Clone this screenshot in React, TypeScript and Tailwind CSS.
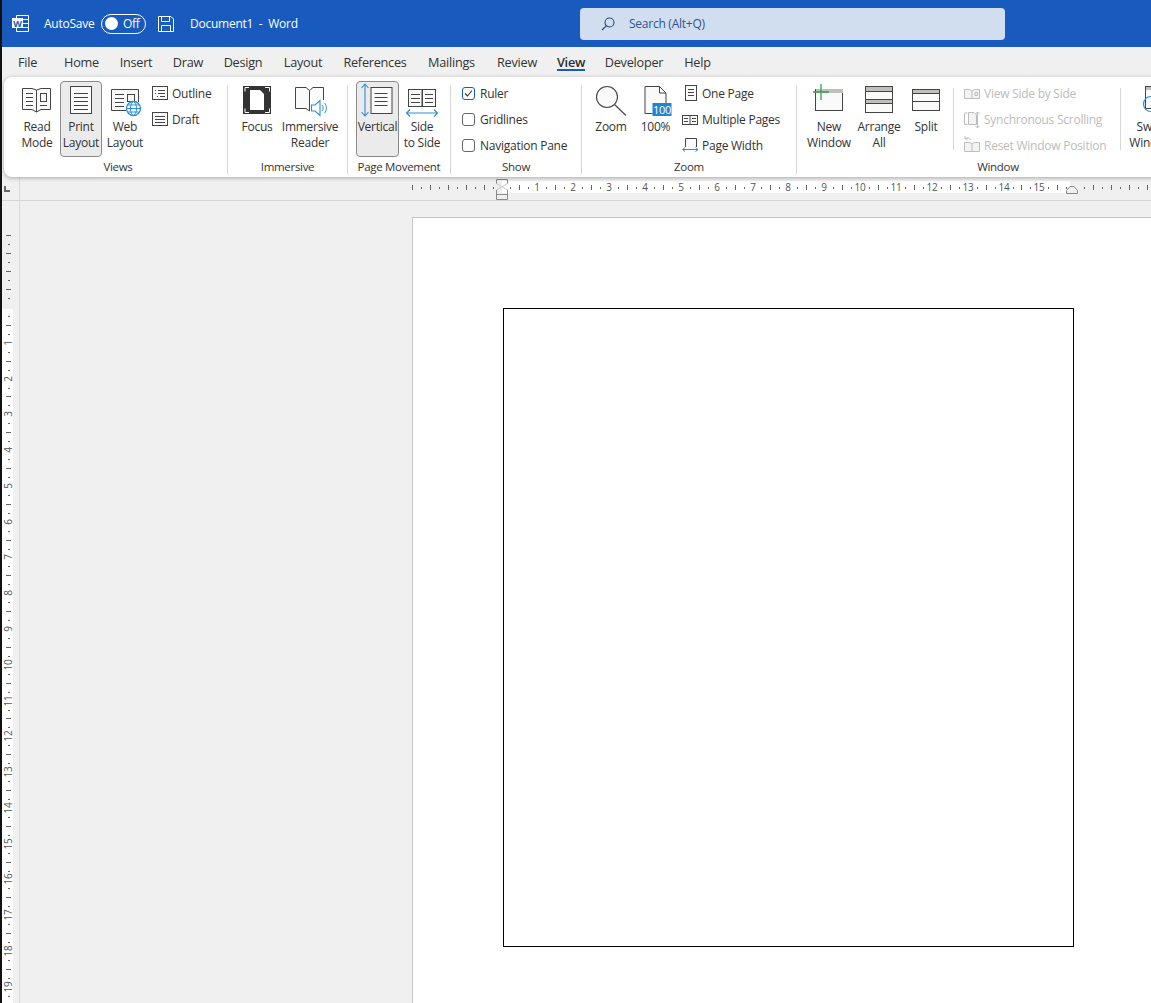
import React from "react";

const D = "#444444";
const B = "#2b8fd6";
const G = "#bdbdbd";

function BigIcon({ cx, children }: { cx: number; children: React.ReactNode }) {
  return (
    <svg width={36} height={37} viewBox={`${cx - 18} 82 36 37`} className="shrink-0 overflow-visible">
      {children}
    </svg>
  );
}

function Big({ cx, w, l1, l2, active, children }: { cx: number; w: string; l1: string; l2?: string; active?: boolean; children: React.ReactNode }) {
  return (
    <div className={`${w} h-[76px] mt-px rounded-[4px] border flex flex-col items-center shrink-0 ${active ? "border-[#8a8a8a] bg-[#ebebeb]" : "border-transparent"}`}>
      <BigIcon cx={cx}>{children}</BigIcon>
      <div className="leading-[16px] text-center whitespace-nowrap">{l1}</div>
      {l2 && <div className="leading-[16px] text-center whitespace-nowrap">{l2}</div>}
    </div>
  );
}

function Small({ x, cy, label, off, children }: { x: number; cy: number; label: string; off?: boolean; children: React.ReactNode }) {
  return (
    <div className={`h-[26px] flex items-center gap-[3px] whitespace-nowrap ${off ? "text-[#bcbcbc]" : ""}`}>
      <svg width={18} height={26} viewBox={`${x - 1} ${cy - 13} 18 26`} className="shrink-0 overflow-visible">
        {children}
      </svg>
      <span className="pt-[2px]">{label}</span>
    </div>
  );
}

function Check({ label, on }: { label: string; on?: boolean }) {
  return (
    <div className="h-[26px] flex items-center gap-[5px] whitespace-nowrap">
      <div className={`w-[13px] h-[13px] rounded-[3px] border flex items-center justify-center ${on ? "border-[#185abd]" : "border-[#666666]"}`}>
        {on && (
          <svg width={9} height={9} viewBox="0 0 9 9">
            <path d="M1 4.5 L3.5 7 L8 1.5" fill="none" stroke="#333" strokeWidth={1.1} />
          </svg>
        )}
      </div>
      <span className="pt-[2px]">{label}</span>
    </div>
  );
}

const Sep = () => <div className="w-px h-[89px] mt-[5px] bg-[#d6d6d6] shrink-0" />;
const InnerSep = () => <div className="w-px h-[62px] mt-[8px] bg-[#d6d6d6] shrink-0" />;
const Label = ({ children, className = "" }: { children: string; className?: string }) => (
  <div className={`h-[16px] mt-[1px] text-[11.5px] leading-[16px] tracking-[-0.3px] text-center whitespace-nowrap ${className}`}>{children}</div>
);

function Lines({ x1, x2, ys, c = D }: { x1: number; x2: number; ys: number[]; c?: string }) {
  return (
    <>
      {ys.map((y) => (
        <path key={y} d={`M${x1} ${y}.5H${x2}`} stroke={c} strokeWidth={1} />
      ))}
    </>
  );
}

const Doc = ({ x, y, w, h }: { x: number; y: number; w: number; h: number }) => (
  <rect x={x + 0.5} y={y + 0.5} width={w} height={h} fill="#fafafa" stroke={D} strokeWidth={1} />
);

function HRuler() {
  const o = 501.5;
  const s = 35.86 / 4;
  const ticks: React.ReactNode[] = [];
  for (let i = -10; i <= 72; i++) {
    if (i === 0 || i === 64) continue;
    const x = Math.round(o + i * s);
    if (i > 0 && i < 64 && i % 4 === 0) {
      ticks.push(
        <text key={i} x={x} y={191} textAnchor="middle" fontSize={10} fill="#555555">
          {i / 4}
        </text>
      );
    } else if (((i % 2) + 2) % 2 === 0) {
      ticks.push(<rect key={i} x={x} y={185} width={1} height={5} fill="#666666" />);
    } else {
      ticks.push(<rect key={i} x={x} y={187} width={1} height={2} fill="#666666" />);
    }
  }
  return (
    <div className="h-[24px] flex border-b border-[#d6d6d6] shrink-0">
      <div className="w-[18px] border-r border-[#d9d9d9] shrink-0 flex items-start">
        <div className="w-[6px] h-[6px] ml-[2px] mt-[9px] border-l-2 border-b-2 border-[#666666]" />
      </div>
      <svg width={1131} height={23} viewBox="20 177 1131 23" className="shrink-0">
        <rect x={502} y={181} width={568} height={12} fill="#ffffff" />
        {ticks}
        <path d="M496.5 183.500L507.5 190M507.5 183.500L496.5 190" stroke="#c8c8c8" fill="none" />
        <path d="M496.5 183.500V179.500H507.5V183.500" stroke="#8a8a8a" fill="none" />
        <path d="M496.5 190V199.500H507.5V190M496.5 194.500H507.5" stroke="#8a8a8a" fill="none" />
        <path d="M1066.5 193.500V190.500L1070 186.500H1074L1077.5 190.500V193.500Z" fill="#f0f0f0" stroke="#8a8a8a" />
      </svg>
    </div>
  );
}

function VRuler() {
  const o = 307;
  const s = 35.78 / 4;
  const ticks: React.ReactNode[] = [];
  for (let i = -8; i <= 78; i++) {
    if (i === 0) continue;
    const y = Math.round(o + i * s);
    if (i > 0 && i % 4 === 0) {
      ticks.push(
        <text key={i} x={8.5} y={y + 3.5} textAnchor="middle" fontSize={10} fill="#555555" transform={`rotate(-90 8.5 ${y})`}>
          {i / 4}
        </text>
      );
    } else if (((i % 2) + 2) % 2 === 0) {
      ticks.push(<rect key={i} x={6} y={y} width={5} height={1} fill="#666666" />);
    } else {
      ticks.push(<rect key={i} x={8} y={y} width={2} height={1} fill="#666666" />);
    }
  }
  return (
    <div className="w-[18px] border-r border-[#d9d9d9] shrink-0">
      <svg width={17} height={802} viewBox="2 201 17 802">
        <rect x={2} y={309} width={11} height={694} fill="#ffffff" />
        {ticks}
      </svg>
    </div>
  );
}

const tabs = [
  { t: "File", c: "w-[39px]" },
  { t: "Home", c: "w-[69px]" },
  { t: "Insert", c: "w-[40px]" },
  { t: "Draw", c: "w-[64px]" },
  { t: "Design", c: "w-[46px]" },
  { t: "Layout", c: "w-[74px]" },
  { t: "References", c: "w-[70px]" },
  { t: "Mailings", c: "w-[83px]" },
  { t: "Review", c: "w-[48px]" },
  { t: "View", c: "w-[60px]" },
  { t: "Developer", c: "w-[66px]" },
  { t: "Help", c: "w-[61px]" },
];

export default function App() {
  return (
    <div className="w-[1151px] h-[1003px] overflow-hidden bg-[#f0f0f0] border-l-2 border-[#111111] flex flex-col text-[12px] text-[#333333] font-['Open_Sans','Liberation_Sans',sans-serif] tracking-[-0.25px]">
      {/* Title bar */}
      <div className="h-[47px] bg-[#185abd] flex items-center text-white shrink-0">
        <svg width={18} height={18} viewBox="0 0 18 18" className="ml-[10px] shrink-0">
          <path d="M4.5 .5H16.5V16.5H4.5Z" fill="none" stroke="#fff" />
          <path d="M10 4.5H16M10 8.5H16M10 12.5H16" stroke="#fff" />
          <rect x={0} y={3} width={11} height={10} fill="#fff" />
          <text x={5.5} y={11.5} textAnchor="middle" fontSize={9} fontWeight={700} fill="#185abd">W</text>
        </svg>
        <span className="ml-[14px] w-[50px] whitespace-nowrap">AutoSave</span>
        <div className="ml-[7px] w-[45px] h-[20px] rounded-full border border-white flex items-center">
          <div className="ml-[3px] w-[13px] h-[13px] rounded-full bg-white" />
          <span className="ml-[5px]">Off</span>
        </div>
        <svg width={16} height={16} viewBox="0 0 16 16" className="ml-[12px] shrink-0">
          <path d="M.5 .5H13L15.5 3V15.5H.5Z M3.5 .5V5.5H11.5V.5 M3.5 15.5V9.5H12.5V15.5" fill="none" stroke="#fff" />
        </svg>
        <span className="ml-[16px] w-[390px] whitespace-pre">Document1  -  Word</span>
        <div className="w-[425px] h-[32px] rounded-[4px] bg-[#d1deef] flex items-center text-[#2c5590]">
          <svg width={14} height={14} viewBox="0 0 14 14" className="ml-[21px] shrink-0">
            <circle cx={8.5} cy={5.5} r={4.5} fill="none" stroke="#24497f" strokeWidth={1.1} />
            <path d="M5.2 8.8L1 13" stroke="#24497f" strokeWidth={1.2} />
          </svg>
          <span className="ml-[14px]">Search (Alt+Q)</span>
        </div>
      </div>

      {/* Tabs */}
      <div className="h-[30px] flex items-center pl-[6px] pt-[2px] text-[12.7px] shrink-0">
        {tabs.map((x) => (
          <div key={x.t} className={`${x.c} shrink-0 flex justify-center whitespace-nowrap`}>
            {x.t === "View" ? (
              <span className="relative font-semibold text-[#2b2b2b]">
                {x.t}
                <span className="absolute left-0 right-0 top-[16px] h-[2px] bg-[#185abd]" />
              </span>
            ) : (
              x.t
            )}
          </div>
        ))}
      </div>

      {/* Ribbon */}
      <div className="relative z-10 ml-[2px] w-[1400px] h-[100px] rounded-[8px] bg-white shadow-[0_1px_4px_rgba(0,0,0,0.3)] flex pt-[3px] shrink-0">
        {/* Views */}
        <div className="w-[223px] flex flex-col shrink-0">
          <div className="h-[78px] flex pl-[12px]">
            <Big cx={37} w="w-[42px]" l1="Read" l2="Mode">
              <path d="M22.5 88.5H32L36.5 90L41 88.5H50.5V109.5H41L36.5 112L32 109.5H22.5Z" fill="#fafafa" stroke={D} />
              <path d="M36.5 90V112" stroke={D} />
              <Lines x1={26} x2={33} ys={[93, 97, 101, 105]} />
              <rect x={40.5} y={93.5} width={6} height={8} fill="none" stroke={D} />
              <Lines x1={40} x2={47} ys={[105]} />
            </Big>
            <div className="w-[2px]" />
            <Big cx={81} w="w-[42px]" l1="Print" l2="Layout" active>
              <Doc x={70} y={86} w={21} h={27} />
              <Lines x1={74} x2={88} ys={[93, 97, 101, 105, 109]} />
            </Big>
            <div className="w-[2px]" />
            <Big cx={125} w="w-[42px]" l1="Web" l2="Layout">
              <path d="M126 110.5H111.5V89.5H138.5V102" fill="#fafafa" stroke={D} />
              <Lines x1={115} x2={124} ys={[94, 98, 102, 106]} />
              <rect x={127.5} y={94.5} width={7} height={7} fill="none" stroke={D} />
              <circle cx={133.5} cy={108.5} r={7} fill="#ffffff" stroke={B} strokeWidth={1.3} />
              <ellipse cx={133.5} cy={108.5} rx={3} ry={7} fill="none" stroke={B} />
              <path d="M126.5 108.5H140.5M127.5 105H139.5M127.5 112H139.5" stroke={B} />
            </Big>
            <div className="ml-[5px] flex flex-col">
              <Small x={152} cy={93} label="Outline">
                <rect x={152.5} y={86.5} width={15} height={13} fill="#fafafa" stroke={D} />
                <path d="M155 90.5h1M155 93.5h1M157 96.5h1" stroke={D} />
                <path d="M158 90.5h7M158 93.5h7M160 96.5h5" stroke={D} />
              </Small>
              <Small x={152} cy={119} label="Draft">
                <rect x={152.5} y={112.5} width={15} height={13} fill="#fafafa" stroke={D} />
                <path d="M155 116.5h10M155 119.5h10M155 122.5h10" stroke={D} />
              </Small>
            </div>
          </div>
          <Label className="pl-[5px]">Views</Label>
        </div>
        <Sep />

        {/* Immersive */}
        <div className="w-[119px] flex flex-col shrink-0">
          <div className="h-[78px] flex pl-[8px] gap-[4px]">
            <Big cx={257} w="w-[42px]" l1="Focus">
              <rect x={243} y={86} width={28} height={28} fill="#333333" />
              <path d="M250 90H260L264 94V110H250Z" fill="#ffffff" />
              <path d="M245 91.5V87.5H249M265 87.5H269.5V91.5M245 108.5V112.5H249M265 112.5H269.5V108.5" fill="none" stroke="#ffffff" />
            </Big>
            <Big cx={310} w="w-[56px]" l1="Immersive" l2="Reader">
              <path d="M309.5 111V90.5L306 87.5H295.5V108.5H306L309.5 111ZM309.5 90.5L313 87.5H323.5V100" fill="#fafafa" stroke={D} />
              <path d="M311.5 105H315L320 100.5V115.5L315 111H311.5Z" fill="#ffffff" stroke={B} strokeWidth={1.1} />
              <path d="M322 105C323.5 106.500 323.500 109.500 322 111M324.500 103C327 105.500 327 110.500 324.500 113" fill="none" stroke={B} />
            </Big>
          </div>
          <Label>Immersive</Label>
        </div>
        <Sep />

        {/* Page Movement */}
        <div className="w-[102px] flex flex-col shrink-0">
          <div className="h-[78px] flex pl-[8px] gap-[2px]">
            <Big cx={377.5} w="w-[43px]" l1="Vertical" active>
              <path d="M364.500 84V115.500M361 88L364.500 84L368 88M361 112L364.500 116L368 112" fill="none" stroke={B} strokeWidth={1.1} />
              <Doc x={370} y={87} w={21} h={26} />
              <Lines x1={374} x2={387} ys={[93, 97, 101, 105]} />
            </Big>
            <Big cx={422} w="w-[42px]" l1="Side" l2="to Side">
              <rect x={408.5} y={89.5} width={13.500} height={17} fill="#fafafa" stroke={D} />
              <rect x={422.5} y={89.5} width={13} height={17} fill="#fafafa" stroke={D} />
              <Lines x1={411} x2={420} ys={[94, 98, 102]} />
              <Lines x1={425} x2={433} ys={[94, 98, 102]} />
              <path d="M406.500 113H437.500M410 109.500L406.500 113L410 116.500M434 109.500L437.500 113L434 116.500" fill="none" stroke={B} strokeWidth={1.1} />
            </Big>
          </div>
          <Label>Page Movement</Label>
        </div>
        <Sep />

        {/* Show */}
        <div className="w-[130px] flex flex-col shrink-0">
          <div className="h-[78px] pl-[11px]">
            <Check label="Ruler" on />
            <Check label="Gridlines" />
            <Check label="Navigation Pane" />
          </div>
          <Label>Show</Label>
        </div>
        <Sep />

        {/* Zoom */}
        <div className="w-[214px] flex flex-col shrink-0">
          <div className="h-[78px] flex pl-[8px] gap-[2px]">
            <Big cx={611} w="w-[42px]" l1="Zoom">
              <circle cx={607} cy={97} r={10.500} fill="#fafafa" stroke={D} strokeWidth={1.100} />
              <path d="M614.500 104.500L626 115.500" stroke={D} strokeWidth={1.100} />
            </Big>
            <Big cx={655.500} w="w-[43px]" l1="100%">
              <path d="M644.500 113.500V86.500H659L665.500 93V103M659 86.500V93H665.500M644.500 113.500H652" fill="#fafafa" stroke={D} />
              <rect x={652} y={103} width={19} height={13} fill="#1f86cc" />
              <text x={661.500} y={113.500} textAnchor="middle" fontSize={11} fill="#ffffff">100</text>
            </Big>
            <div className="ml-[2px] flex flex-col">
              <Small x={682} cy={93} label="One Page">
                <rect x={685.500} y={85.500} width={11} height={15} fill="#fafafa" stroke={D} />
                <path d="M688 89.500h6M688 92.500h6M688 95.500h6" stroke={D} />
              </Small>
              <Small x={682} cy={119} label="Multiple Pages">
                <rect x={682.500} y={115.500} width={15} height={9} fill="#fafafa" stroke={D} />
                <path d="M690 115.500V124.500" stroke={D} />
                <path d="M684 118.500h4M684 121.500h4M692 118.500h4M692 121.500h4" stroke={D} />
              </Small>
              <Small x={682} cy={145} label="Page Width">
                <path d="M685.500 147V138.500H696.500V147" fill="#fafafa" stroke={D} />
                <path d="M682.500 149.500H698M685 147.500L682.500 149.500L685 151.500M695.500 147.500L698 149.500L695.500 151.500" fill="none" stroke={B} />
              </Small>
            </div>
          </div>
          <Label>Zoom</Label>
        </div>
        <Sep />

        {/* Window */}
        <div className="w-[402px] flex flex-col shrink-0">
          <div className="h-[78px] flex pl-[11px] overflow-hidden">
            <Big cx={829} w="w-[42px]" l1="New" l2="Window">
              <rect x={815.500} y={89.500} width={27} height={21} fill="#fafafa" stroke={D} />
              <rect x={816} y={89} width={27} height={4} fill="#bfbfbb" />
              <path d="M821 84V100M813 92H829" stroke="#2ea44f" strokeWidth={1.300} />
            </Big>
            <div className="w-[6px] shrink-0" />
            <Big cx={879} w="w-[46px]" l1="Arrange" l2="All">
              <rect x={865.500} y={86.500} width={27} height={26} fill="#fafafa" stroke={D} />
              <rect x={866} y={87} width={26} height={4} fill="#bfbfbb" />
              <rect x={866} y={99} width={26} height={4} fill="#bfbfbb" />
              <path d="M866 91.500H892M866 99.500H892M866 103.500H892" stroke={D} />
            </Big>
            <div className="w-[3px] shrink-0" />
            <Big cx={926} w="w-[42px]" l1="Split">
              <rect x={912.500} y={89.500} width={27} height={21} fill="#fafafa" stroke={D} />
              <rect x={913} y={90} width={26} height={3} fill="#bfbfbb" />
              <path d="M913 93.500H939M913 101.500H939" stroke={D} />
            </Big>
            <div className="w-[6px] shrink-0" />
            <InnerSep />
            <div className="ml-[9px] w-[157px] flex flex-col shrink-0">
              <Small x={964} cy={93} label="View Side by Side" off>
                <path d="M964.500 98.500V89.500H969.500L972 91L974.500 89.500H979.500V98.500Z" fill="#f3f3f3" stroke={G} />
                <path d="M972 91V98M975 92.500h2.500v3H975z" fill="none" stroke={G} />
              </Small>
              <Small x={964} cy={119} label="Synchronous Scrolling" off>
                <path d="M967.500 113H964.500V124.500H967.500" fill="none" stroke={G} />
                <path d="M968.500 112.500H974L976.500 115V124.500H968.500Z" fill="#f3f3f3" stroke={G} />
                <path d="M977.500 112V128M975.500 114L977.500 112L979.500 114M975.500 126L977.500 128L979.500 126" fill="none" stroke={G} />
              </Small>
              <Small x={964} cy={145} label="Reset Window Position" off>
                <path d="M964.500 151.500V142.500H969.500L972 144L974.500 142.500H979.500V151.500Z" fill="#f3f3f3" stroke={G} />
                <path d="M972 144V151M971 140C969 137.500 967 137.500 965.500 138.500M965 136V139H968" fill="none" stroke={G} />
              </Small>
            </div>
            <InnerSep />
            <div className="w-[8px] shrink-0" />
            <Big cx={1154} w="w-[50px]" l1="Switch" l2="Windows">
              <rect x={1145.500} y={86.500} width={27} height={22} fill="#fafafa" stroke={D} />
              <rect x={1146} y={87} width={26} height={3} fill="#bfbfbb" />
              <circle cx={1151} cy={104} r={7.500} fill="none" stroke={B} strokeWidth={1.200} />
            </Big>
          </div>
          <Label>Window</Label>
        </div>
      </div>

      <HRuler />

      {/* Document area */}
      <div className="flex-1 flex min-h-0">
        <VRuler />
        <div className="flex-1 pl-[392px] pt-[16px]">
          <div className="h-[900px] bg-white border-l border-t border-[#c6c6c6] pl-[90px] pt-[90px]">
            <div className="w-[571px] h-[639px] border border-black" />
          </div>
        </div>
      </div>
    </div>
  );
}
